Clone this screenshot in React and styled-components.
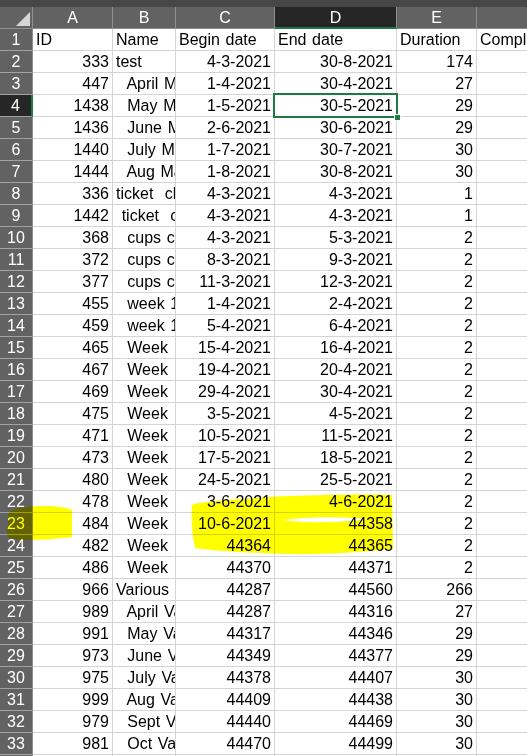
import React from 'react';
import styled, { createGlobalStyle } from 'styled-components';

const GlobalStyle = createGlobalStyle`
  html, body {
    margin: 0;
    padding: 0;
    background: #ffffff;
    overflow: hidden;
  }
  body {
    font-family: "Liberation Sans", Arial, sans-serif;
  }
`;

const COLUMNS = ['A', 'B', 'C', 'D', 'E', 'F'];

const ROWS = [
  ['ID', 'Name', 'Begin date', 'End date', 'Duration', 'Completed'],
  [333, 'test', '4-3-2021', '30-8-2021', 174],
  [447, '  April Maand', '1-4-2021', '30-4-2021', 27],
  [1438, '  May Maand', '1-5-2021', '30-5-2021', 29],
  [1436, '  June Maand', '2-6-2021', '30-6-2021', 29],
  [1440, '  July Maand', '1-7-2021', '30-7-2021', 30],
  [1444, '  Aug Maand', '1-8-2021', '30-8-2021', 30],
  [336, 'ticket  check', '4-3-2021', '4-3-2021', 1],
  [1442, ' ticket  check', '4-3-2021', '4-3-2021', 1],
  [368, '  cups check', '4-3-2021', '5-3-2021', 2],
  [372, '  cups check', '8-3-2021', '9-3-2021', 2],
  [377, '  cups check', '11-3-2021', '12-3-2021', 2],
  [455, '  week 14', '1-4-2021', '2-4-2021', 2],
  [459, '  week 14', '5-4-2021', '6-4-2021', 2],
  [465, '  Week  15', '15-4-2021', '16-4-2021', 2],
  [467, '  Week  16', '19-4-2021', '20-4-2021', 2],
  [469, '  Week  17', '29-4-2021', '30-4-2021', 2],
  [475, '  Week  18', '3-5-2021', '4-5-2021', 2],
  [471, '  Week  19', '10-5-2021', '11-5-2021', 2],
  [473, '  Week  20', '17-5-2021', '18-5-2021', 2],
  [480, '  Week  21', '24-5-2021', '25-5-2021', 2],
  [478, '  Week  22', '3-6-2021', '4-6-2021', 2],
  [484, '  Week  23', '10-6-2021', 44358, 2],
  [482, '  Week  24', 44364, 44365, 2],
  [486, '  Week  25', 44370, 44371, 2],
  [966, 'Various', 44287, 44560, 266],
  [989, '  April Various', 44287, 44316, 27],
  [991, '  May Various', 44317, 44346, 29],
  [973, '  June Various', 44349, 44377, 29],
  [975, '  July Various', 44378, 44407, 30],
  [999, '  Aug Various', 44409, 44438, 30],
  [979, '  Sept Various', 44440, 44469, 30],
  [981, '  Oct Various', 44470, 44499, 30],
  [],
];

const SELECTED_ROW = 4;
const SELECTED_COL = 'D';

const Wrap = styled.div`
  position: relative;
  width: 527px;
  height: 756px;
  overflow: hidden;
  background: #ffffff;
`;

const TopBand = styled.div`
  height: 7px;
  background: #474747;
`;

const Sheet = styled.div`
  display: grid;
  grid-template-columns: 33px 80px 63px 99px 122px 80px 120px;
  grid-auto-rows: 22px;
  font-size: 16px;
  line-height: 21px;
  color: #000000;
`;

const Corner = styled.div`
  position: relative;
  background: #626262;
  border-right: 1px solid #8e8e8e;
  border-bottom: 1px solid #8e8e8e;

  &::after {
    content: '';
    position: absolute;
    right: 2px;
    bottom: 2px;
    width: 0;
    height: 0;
    border-left: 14px solid transparent;
    border-bottom: 14px solid #d6d6d6;
  }
`;

const ColHeader = styled.div`
  box-sizing: border-box;
  background: ${({ $selected }) => ($selected ? '#262626' : '#626262')};
  color: #ffffff;
  text-align: center;
  border-right: 1px solid #8e8e8e;
  border-bottom: ${({ $selected }) => ($selected ? '2px solid #1d7a45' : '1px solid #8e8e8e')};
  line-height: 21px;
`;

const RowHeader = styled.div`
  box-sizing: border-box;
  background: ${({ $selected }) => ($selected ? '#262626' : '#626262')};
  color: #ffffff;
  text-align: center;
  border-bottom: 1px solid #a2a2a2;
  border-right: ${({ $selected }) => ($selected ? '2px solid #1d7a45' : '1px solid #8e8e8e')};
`;

const Cell = styled.div`
  position: relative;
  box-sizing: border-box;
  padding: 0 3px;
  border-right: 1px solid #d4d4d4;
  border-bottom: 1px solid #d4d4d4;
  white-space: pre;
  word-spacing: ${({ $numeric }) => ($numeric ? '0' : '1.2px')};
  overflow: ${({ $selected }) => ($selected ? 'visible' : 'hidden')};
  text-align: ${({ $numeric }) => ($numeric ? 'right' : 'left')};
  z-index: ${({ $selected }) => ($selected ? 2 : 'auto')};

  ${({ $selected }) =>
    $selected &&
    `
    &::after {
      content: '';
      position: absolute;
      top: -2px;
      left: -2px;
      right: -2px;
      bottom: -2px;
      border: 2px solid #1d7a45;
      pointer-events: none;
    }
    &::before {
      content: '';
      position: absolute;
      right: -5px;
      bottom: -5px;
      width: 5px;
      height: 5px;
      background: #1d7a45;
      border: 1px solid #ffffff;
      z-index: 3;
    }
  `}
`;

const Marker = styled.svg`
  position: absolute;
  left: 0;
  top: 0;
  width: 527px;
  height: 756px;
  pointer-events: none;
  mix-blend-mode: multiply;
`;

function isNumeric(value, rowIndex) {
  if (rowIndex === 0) return false;
  return typeof value === 'number' || /^\d+-\d+-\d+$/.test(String(value));
}

function App() {
  return (
    <Wrap>
      <GlobalStyle />
      <TopBand />
      <Sheet>
        <Corner />
        {COLUMNS.map((col) => (
          <ColHeader key={col} $selected={col === SELECTED_COL}>
            {col}
          </ColHeader>
        ))}
        {ROWS.map((row, r) => (
          <React.Fragment key={r}>
            <RowHeader $selected={r + 1 === SELECTED_ROW}>{r + 1}</RowHeader>
            {COLUMNS.map((col, c) => {
              const value = row[c];
              return (
                <Cell
                  key={col}
                  $numeric={isNumeric(value, r)}
                  $selected={r + 1 === SELECTED_ROW && col === SELECTED_COL}
                >
                  {value === undefined ? '' : value}
                </Cell>
              );
            })}
          </React.Fragment>
        ))}
      </Sheet>
      <Marker viewBox="0 0 527 756">
        <path
          fill="#ffff00"
          d="M 9 512 C 14 508, 30 506, 45 506 C 58 506, 68 508, 72 510 L 72 537 C 60 539, 40 540, 25 540 C 18 540, 10 539, 7 536 Z"
        />
        <path
          fill="#ffff00"
          fillRule="evenodd"
          d="M 192 505 C 196 502, 230 500, 270 497 C 310 495, 360 494, 392 495 L 393 549 C 370 551, 330 555, 290 554 C 250 553, 215 551, 195 548 C 192 535, 191 518, 192 505 Z
             M 283 520 C 300 517, 340 516, 368 519 C 340 523, 300 523, 283 520 Z"
        />
      </Marker>
    </Wrap>
  );
}

export default App;
